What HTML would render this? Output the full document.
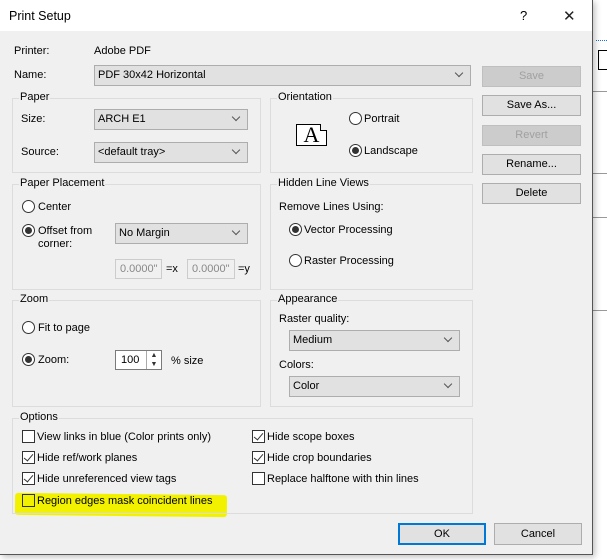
<!DOCTYPE html>
<html><head><meta charset="utf-8"><style>
*{box-sizing:border-box;margin:0;padding:0}
body{width:607px;height:560px;overflow:hidden;background:#fff;font-family:"Liberation Sans",sans-serif;font-size:11px;color:#000;position:relative}
.a{position:absolute;white-space:nowrap}
#dlg{position:absolute;left:0;top:0;width:593px;height:555px;background:#f0f0f0;border-right:1px solid #555;border-bottom:1px solid #555;box-shadow:2px 2px 6px rgba(0,0,0,.25)}
#title{position:absolute;left:0;top:0;width:592px;height:31px;background:#fff}
.grp{position:absolute;border:1px solid #dcdcdc}
.gl{position:absolute;top:-8px;left:6px;background:#f0f0f0;padding:0 1px}
.cb{position:absolute;background:#e1e1e1;border:1px solid #adadad;padding:3px 0 0 3px}
.cb:after{content:"";position:absolute;right:8px;top:4px;width:5px;height:5px;border-right:1px solid #555;border-bottom:1px solid #555;transform:rotate(45deg)}
.btn{position:absolute;background:#e1e1e1;border:1px solid #adadad;text-align:center;line-height:19px}
.dis{color:#a0a0a0;background:#cccccc;border-color:#bfbfbf}
.r{position:absolute;width:13px;height:13px;border:1px solid #333;border-radius:50%;background:#fff}
.r.on:after{content:"";position:absolute;left:2px;top:2px;width:7px;height:7px;border-radius:50%;background:#333}
.c{position:absolute;width:13px;height:13px;border:1px solid #333;background:#fff}
.c.on:after{content:"";position:absolute;left:3px;top:0px;width:4px;height:8px;border-right:1px solid #333;border-bottom:1px solid #333;transform:rotate(40deg)}
.fld{position:absolute;border:1px solid #ccc;background:#f0f0f0;color:#888;padding:3px 0 0 4px}
</style></head><body>
<div class="a" style="left:596px;top:40px;width:11px;height:1px;border-top:1px dotted #1a6ee0"></div>
<div class="a" style="left:598px;top:50px;width:9px;height:20px;border:1px solid #000;border-right:none"></div>
<div class="a" style="left:593px;top:91px;width:14px;height:1px;background:#999"></div>
<div class="a" style="left:593px;top:173px;width:14px;height:1px;background:#999"></div>
<div class="a" style="left:593px;top:217px;width:14px;height:1px;background:#999"></div>
<div class="a" style="left:593px;top:310px;width:14px;height:1px;background:#999"></div>
<div id="dlg">
<div id="title"><span class="a" style="left:9px;top:9px;font-size:12.5px">Print Setup</span>
<span class="a" style="left:520px;top:8px;font-size:13px">?</span>
<span class="a" style="left:563px;top:7px;font-size:15px;font-weight:100;color:#222">✕</span></div>
<span class="a" style="left:14px;top:45px">Printer:</span>
<span class="a" style="left:94px;top:45px">Adobe PDF</span>
<span class="a" style="left:14px;top:69px">Name:</span>
<div class="cb" style="left:94px;top:65px;width:377px;height:21px">PDF 30x42 Horizontal</div>
<div class="btn dis" style="left:482px;top:66px;width:99px;height:21px">Save</div>
<div class="btn" style="left:482px;top:95px;width:99px;height:21px">Save As...</div>
<div class="btn dis" style="left:482px;top:125px;width:99px;height:21px">Revert</div>
<div class="btn" style="left:482px;top:154px;width:99px;height:21px">Rename...</div>
<div class="btn" style="left:482px;top:183px;width:99px;height:21px">Delete</div>

<div class="grp" style="left:12px;top:98px;width:249px;height:75px"><span class="gl">Paper</span></div>
<span class="a" style="left:21px;top:113px">Size:</span>
<div class="cb" style="left:94px;top:109px;width:154px;height:21px">ARCH E1</div>
<span class="a" style="left:21px;top:146px">Source:</span>
<div class="cb" style="left:94px;top:142px;width:154px;height:21px">&lt;default tray&gt;</div>

<div class="grp" style="left:270px;top:98px;width:203px;height:75px"><span class="gl">Orientation</span></div>
<div class="a" style="left:296px;top:124px;width:31px;height:22px;background:#fff;border:1px solid #000;font-family:'Liberation Serif',serif;font-size:22px;line-height:20px;text-align:center">A</div>
<div class="a" style="left:320px;top:124px;width:7px;height:7px;background:#f0f0f0;border-left:1px solid #000;border-bottom:1px solid #000"></div>
<div class="r" style="left:349px;top:112px"></div><span class="a" style="left:364px;top:113px">Portrait</span>
<div class="r on" style="left:349px;top:144px"></div><span class="a" style="left:364px;top:145px">Landscape</span>

<div class="grp" style="left:12px;top:184px;width:249px;height:106px"><span class="gl">Paper Placement</span></div>
<div class="r" style="left:22px;top:200px"></div><span class="a" style="left:38px;top:201px">Center</span>
<div class="r on" style="left:22px;top:224px"></div><span class="a" style="left:38px;top:225px">Offset from</span>
<span class="a" style="left:38px;top:238px">corner:</span>
<div class="cb" style="left:115px;top:223px;width:133px;height:21px">No Margin</div>
<div class="fld" style="left:115px;top:259px;width:47px;height:20px">0.0000"</div><span class="a" style="left:166px;top:263px">=x</span>
<div class="fld" style="left:187px;top:259px;width:48px;height:20px">0.0000"</div><span class="a" style="left:238px;top:263px">=y</span>

<div class="grp" style="left:270px;top:184px;width:203px;height:106px"><span class="gl">Hidden Line Views</span></div>
<span class="a" style="left:279px;top:201px">Remove Lines Using:</span>
<div class="r on" style="left:289px;top:223px"></div><span class="a" style="left:304px;top:224px">Vector Processing</span>
<div class="r" style="left:289px;top:254px"></div><span class="a" style="left:304px;top:255px">Raster Processing</span>

<div class="grp" style="left:12px;top:300px;width:249px;height:107px"><span class="gl">Zoom</span></div>
<div class="r" style="left:22px;top:321px"></div><span class="a" style="left:38px;top:322px">Fit to page</span>
<div class="r on" style="left:22px;top:353px"></div><span class="a" style="left:38px;top:354px">Zoom:</span>
<div class="a" style="left:115px;top:350px;width:47px;height:20px;background:#fff;border:1px solid #7a7a7a;padding:3px 0 0 5px">100</div>
<div class="a" style="left:146px;top:351px;width:15px;height:18px;border-left:1px solid #aaa;font-size:7px;line-height:9px;text-align:center;color:#333">▲<br>▼</div>
<span class="a" style="left:171px;top:355px">% size</span>

<div class="grp" style="left:270px;top:300px;width:203px;height:107px"><span class="gl">Appearance</span></div>
<span class="a" style="left:279px;top:313px">Raster quality:</span>
<div class="cb" style="left:289px;top:330px;width:171px;height:21px">Medium</div>
<span class="a" style="left:279px;top:359px">Colors:</span>
<div class="cb" style="left:289px;top:376px;width:171px;height:21px">Color</div>

<div class="a" style="left:15px;top:494px;width:212px;height:22px;background:#f2f200;border-radius:3px;transform:rotate(0.6deg)"></div>
<div class="grp" style="left:12px;top:418px;width:461px;height:96px"><span class="gl">Options</span></div>
<div class="c" style="left:22px;top:430px"></div><span class="a" style="left:37px;top:431px">View links in blue (Color prints only)</span>
<div class="c on" style="left:22px;top:451px"></div><span class="a" style="left:37px;top:452px">Hide ref/work planes</span>
<div class="c on" style="left:22px;top:472px"></div><span class="a" style="left:37px;top:473px">Hide unreferenced view tags</span>
<div class="c" style="left:22px;top:494px;background:transparent"></div><span class="a" style="left:37px;top:495px">Region edges mask coincident lines</span>
<div class="c on" style="left:252px;top:430px"></div><span class="a" style="left:267px;top:431px">Hide scope boxes</span>
<div class="c on" style="left:252px;top:451px"></div><span class="a" style="left:267px;top:452px">Hide crop boundaries</span>
<div class="c" style="left:252px;top:472px"></div><span class="a" style="left:267px;top:473px">Replace halftone with thin lines</span>

<div class="btn" style="left:398px;top:523px;width:88px;height:22px;border:2px solid #0078d7;line-height:18px">OK</div>
<div class="btn" style="left:494px;top:523px;width:88px;height:22px;line-height:20px">Cancel</div>
</div>
</body></html>
